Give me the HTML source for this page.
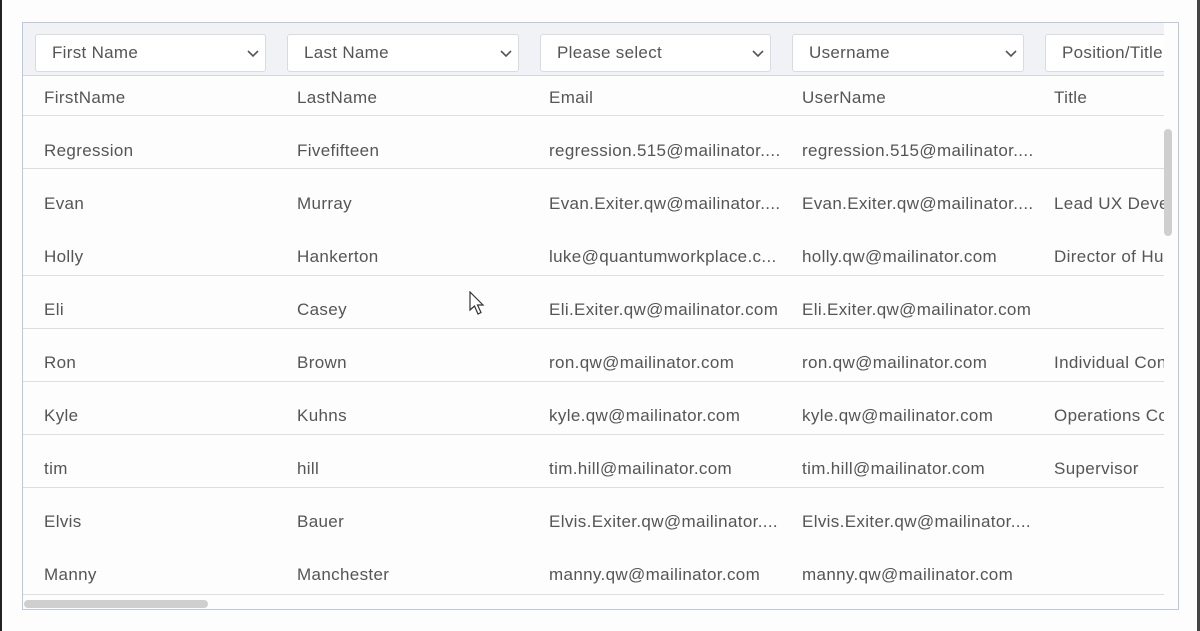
<!DOCTYPE html>
<html><head><style>
body{margin:0;width:1200px;height:631px;background:#fdfdfd;position:relative;overflow:hidden;font-family:"Liberation Sans",sans-serif;}
.edge{position:absolute;top:0;bottom:0;width:2px;background:#222;}
.frame{position:absolute;left:22px;top:22px;width:1155px;height:586px;border:1px solid #bfc8d6;background:#fdfdfd;overflow:hidden;}
.bar{position:absolute;left:0;top:0;width:1142px;height:52px;background:#f0f2f5;border-bottom:1px solid #d3d8e0;}
.sel{position:absolute;top:11px;height:38px;background:#fff;border:1px solid #d8dbe0;border-radius:3px;box-sizing:border-box;font-size:17px;color:#555;line-height:36px;padding-left:16px;letter-spacing:0.3px;}
.sel svg{position:absolute;right:6px;top:15px;}
.t{position:absolute;font-size:17px;color:#555;white-space:nowrap;letter-spacing:0.35px;margin-top:1px;}
.ln{position:absolute;left:0;width:1141px;height:1px;background:#dedede;}
.clip{position:absolute;left:0;top:0;width:1141px;height:586px;overflow:hidden;}
</style></head><body>
<div class="edge" style="left:0"></div>
<div class="edge" style="left:1197px;background:#444;width:3px"></div>
<div class="frame">
<div class="clip">
<div class="bar"></div>
<div class="sel" style="left:12px;width:231px">First Name<svg width="12" height="8"><path d="M1 1 L6 6 L11 1" stroke="#555" stroke-width="1.6" fill="none"/></svg></div>
<div class="sel" style="left:264px;width:232px">Last Name<svg width="12" height="8"><path d="M1 1 L6 6 L11 1" stroke="#555" stroke-width="1.6" fill="none"/></svg></div>
<div class="sel" style="left:517px;width:231px">Please select<svg width="12" height="8"><path d="M1 1 L6 6 L11 1" stroke="#555" stroke-width="1.6" fill="none"/></svg></div>
<div class="sel" style="left:769px;width:232px">Username<svg width="12" height="8"><path d="M1 1 L6 6 L11 1" stroke="#555" stroke-width="1.6" fill="none"/></svg></div>
<div class="sel" style="left:1022px;width:231px">Position/Title</div>

<div class="t" style="left:21px;top:64px">FirstName</div>
<div class="t" style="left:274px;top:64px">LastName</div>
<div class="t" style="left:526px;top:64px">Email</div>
<div class="t" style="left:779px;top:64px">UserName</div>
<div class="t" style="left:1031px;top:64px">Title</div>
<div class="ln" style="top:92px"></div>

<div class="t" style="left:21px;top:117px">Regression</div><div class="t" style="left:274px;top:117px">Fivefifteen</div><div class="t" style="left:526px;top:117px">regression.515@mailinator....</div><div class="t" style="left:779px;top:117px">regression.515@mailinator....</div>
<div class="ln" style="top:145px"></div>
<div class="t" style="left:21px;top:170px">Evan</div><div class="t" style="left:274px;top:170px">Murray</div><div class="t" style="left:526px;top:170px">Evan.Exiter.qw@mailinator....</div><div class="t" style="left:779px;top:170px">Evan.Exiter.qw@mailinator....</div><div class="t" style="left:1031px;top:170px">Lead UX Developer</div>
<div class="t" style="left:21px;top:223px">Holly</div><div class="t" style="left:274px;top:223px">Hankerton</div><div class="t" style="left:526px;top:223px">luke@quantumworkplace.c...</div><div class="t" style="left:779px;top:223px">holly.qw@mailinator.com</div><div class="t" style="left:1031px;top:223px">Director of Human</div>
<div class="ln" style="top:252px"></div>
<div class="t" style="left:21px;top:276px">Eli</div><div class="t" style="left:274px;top:276px">Casey</div><div class="t" style="left:526px;top:276px">Eli.Exiter.qw@mailinator.com</div><div class="t" style="left:779px;top:276px">Eli.Exiter.qw@mailinator.com</div>
<div class="ln" style="top:305px"></div>
<div class="t" style="left:21px;top:329px">Ron</div><div class="t" style="left:274px;top:329px">Brown</div><div class="t" style="left:526px;top:329px">ron.qw@mailinator.com</div><div class="t" style="left:779px;top:329px">ron.qw@mailinator.com</div><div class="t" style="left:1031px;top:329px">Individual Contributor</div>
<div class="ln" style="top:358px"></div>
<div class="t" style="left:21px;top:382px">Kyle</div><div class="t" style="left:274px;top:382px">Kuhns</div><div class="t" style="left:526px;top:382px">kyle.qw@mailinator.com</div><div class="t" style="left:779px;top:382px">kyle.qw@mailinator.com</div><div class="t" style="left:1031px;top:382px">Operations Coord</div>
<div class="ln" style="top:411px"></div>
<div class="t" style="left:21px;top:435px">tim</div><div class="t" style="left:274px;top:435px">hill</div><div class="t" style="left:526px;top:435px">tim.hill@mailinator.com</div><div class="t" style="left:779px;top:435px">tim.hill@mailinator.com</div><div class="t" style="left:1031px;top:435px">Supervisor</div>
<div class="ln" style="top:464px"></div>
<div class="t" style="left:21px;top:488px">Elvis</div><div class="t" style="left:274px;top:488px">Bauer</div><div class="t" style="left:526px;top:488px">Elvis.Exiter.qw@mailinator....</div><div class="t" style="left:779px;top:488px">Elvis.Exiter.qw@mailinator....</div>
<div class="t" style="left:21px;top:541px">Manny</div><div class="t" style="left:274px;top:541px">Manchester</div><div class="t" style="left:526px;top:541px">manny.qw@mailinator.com</div><div class="t" style="left:779px;top:541px">manny.qw@mailinator.com</div>
<div class="ln" style="top:571px"></div>
</div>
<div style="position:absolute;left:1141px;top:106px;width:8px;height:107px;background:#cfcfcf;border-radius:4px"></div>
<div style="position:absolute;left:1px;top:577px;width:184px;height:8px;background:#cfcfcf;border-radius:4px"></div>
</div>
<svg style="position:absolute;left:469px;top:291px" width="18" height="26"><path d="M1 1 L1 19 L5.5 15 L9 23 L12 21.5 L8.5 14 L14 14 Z" fill="#fff" stroke="#333" stroke-width="1.2"/></svg>
</body></html>
